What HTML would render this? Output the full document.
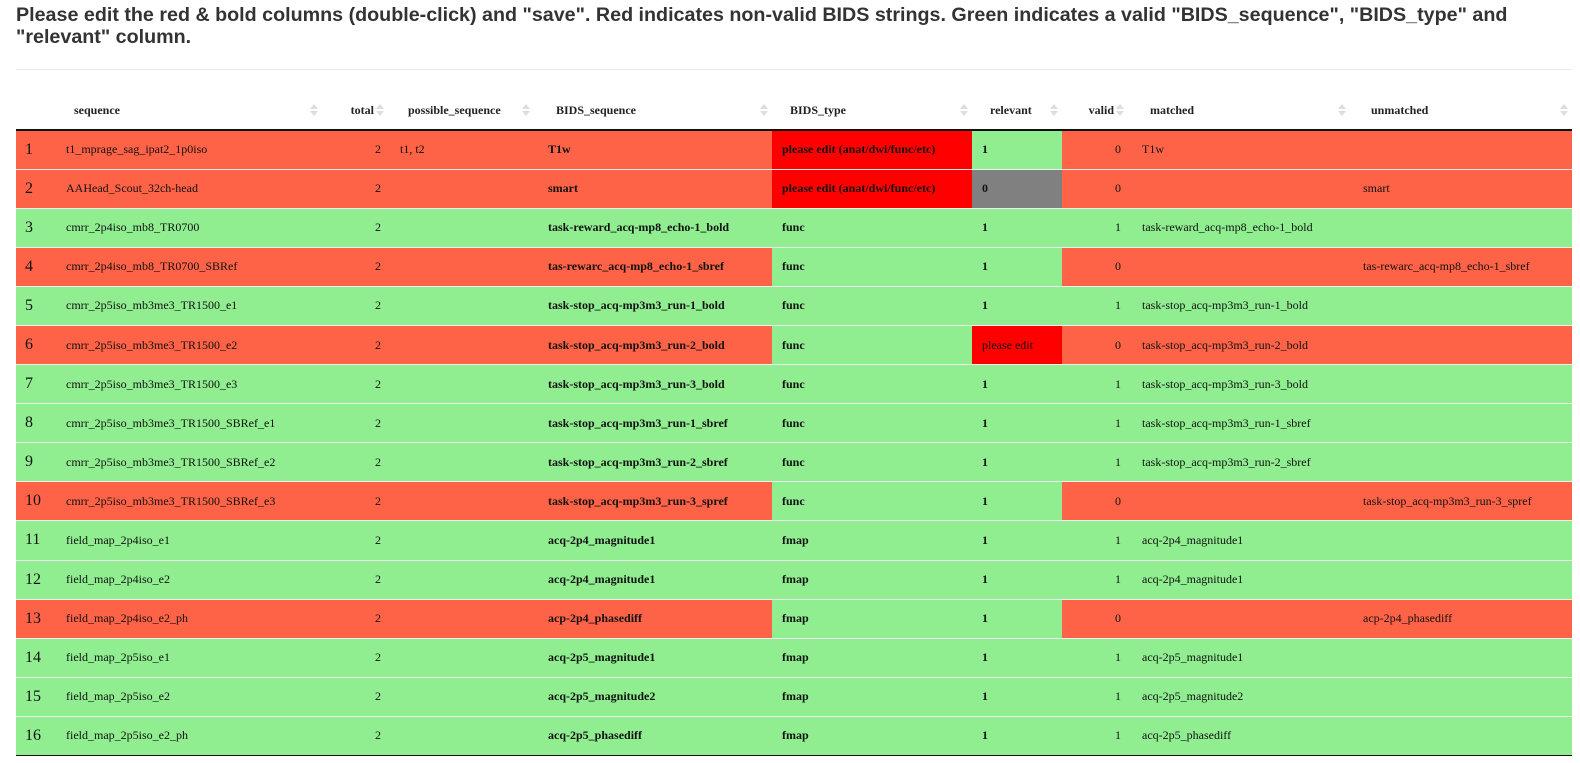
<!DOCTYPE html>
<html><head><meta charset="utf-8"><style>
body{margin:0;background:#fff;font-family:"Liberation Serif",serif;}
h4{position:absolute;left:16px;top:4px;margin:0;font-family:"Liberation Sans",sans-serif;font-weight:bold;font-size:19.7px;line-height:22px;color:#333;white-space:nowrap;}
.hr{position:absolute;left:16px;top:69px;width:1556px;height:1px;background:#e8e8e8;}
table{position:absolute;left:16px;top:92px;border-collapse:collapse;table-layout:fixed;width:1556px;font-size:12px;color:#111;}
th,td{box-sizing:border-box;}
th{height:38px;font-weight:bold;text-align:left;padding:0 0 0 16px;position:relative;border-bottom:2px solid #111;color:#222;}
th.r{text-align:right;padding:0 14px 0 0;}
th .s{position:absolute;right:4px;top:12px;width:8px;height:14px;}
th .s:before{content:"";position:absolute;left:0;top:0;border:4px solid transparent;border-bottom:5px solid #ddd;border-top:0;}
th .s:after{content:"";position:absolute;left:0;top:7px;border:4px solid transparent;border-top:5px solid #ddd;border-bottom:0;}
td{height:39.1px;padding:0 0 0 8px;border-top:1px solid #eee;white-space:nowrap;overflow:hidden;}
tr:first-child td{border-top:none}
td.i{font-size:16px;padding-left:9px}
td.n{text-align:right;padding:0 7px 0 0}
td.b{font-weight:bold;padding-left:14px}
td.t{font-weight:bold;padding-left:10px}
tbody tr:last-child td{border-bottom:1px solid #111}
.T{background:#ff6347}.G{background:#90ee90}.R{background:#ff0000}.Y{background:#808080}
</style></head><body>
<h4>Please edit the red &amp; bold columns (double-click) and "save". Red indicates non-valid BIDS strings. Green indicates a valid "BIDS_sequence", "BIDS_type" and<br>"relevant" column.</h4>
<div class="hr"></div>
<table>
<thead><tr><th style="width:42px"></th><th style="width:264px">sequence<span class="s"></span></th><th class="r" style="width:66px">total<span class="s"></span></th><th style="width:146px;padding-left:20px">possible_sequence<span class="s"></span></th><th style="width:238px;padding-left:22px">BIDS_sequence<span class="s"></span></th><th style="width:200px;padding-left:18px">BIDS_type<span class="s"></span></th><th style="width:90px;padding-left:18px">relevant<span class="s"></span></th><th class="r" style="width:66px">valid<span class="s"></span></th><th style="width:222px;padding-left:22px">matched<span class="s"></span></th><th style="width:222px;padding-left:21px">unmatched<span class="s"></span></th></tr></thead>
<tbody>
<tr class="T"><td class="i">1</td><td>t1_mprage_sag_ipat2_1p0iso</td><td class="n">2</td><td style="padding-left:12px">t1, t2</td><td class="b">T1w</td><td class="t R">please edit (anat/dwi/func/etc)</td><td class="t G">1</td><td class="n">0</td><td style="padding-left:14px">T1w</td><td style="padding-left:13px"></td></tr>
<tr class="T"><td class="i">2</td><td>AAHead_Scout_32ch-head</td><td class="n">2</td><td></td><td class="b">smart</td><td class="t R">please edit (anat/dwi/func/etc)</td><td class="t Y">0</td><td class="n">0</td><td></td><td style="padding-left:13px">smart</td></tr>
<tr class="G"><td class="i">3</td><td>cmrr_2p4iso_mb8_TR0700</td><td class="n">2</td><td></td><td class="b">task-reward_acq-mp8_echo-1_bold</td><td class="t">func</td><td class="t">1</td><td class="n">1</td><td style="padding-left:14px">task-reward_acq-mp8_echo-1_bold</td><td></td></tr>
<tr class="T"><td class="i">4</td><td>cmrr_2p4iso_mb8_TR0700_SBRef</td><td class="n">2</td><td></td><td class="b">tas-rewarc_acq-mp8_echo-1_sbref</td><td class="t G">func</td><td class="t G">1</td><td class="n">0</td><td></td><td style="padding-left:13px">tas-rewarc_acq-mp8_echo-1_sbref</td></tr>
<tr class="G"><td class="i">5</td><td>cmrr_2p5iso_mb3me3_TR1500_e1</td><td class="n">2</td><td></td><td class="b">task-stop_acq-mp3m3_run-1_bold</td><td class="t">func</td><td class="t">1</td><td class="n">1</td><td style="padding-left:14px">task-stop_acq-mp3m3_run-1_bold</td><td></td></tr>
<tr class="T"><td class="i">6</td><td>cmrr_2p5iso_mb3me3_TR1500_e2</td><td class="n">2</td><td></td><td class="b">task-stop_acq-mp3m3_run-2_bold</td><td class="t G">func</td><td class="R" style="padding-left:10px">please edit</td><td class="n">0</td><td style="padding-left:14px">task-stop_acq-mp3m3_run-2_bold</td><td></td></tr>
<tr class="G"><td class="i">7</td><td>cmrr_2p5iso_mb3me3_TR1500_e3</td><td class="n">2</td><td></td><td class="b">task-stop_acq-mp3m3_run-3_bold</td><td class="t">func</td><td class="t">1</td><td class="n">1</td><td style="padding-left:14px">task-stop_acq-mp3m3_run-3_bold</td><td></td></tr>
<tr class="G"><td class="i">8</td><td>cmrr_2p5iso_mb3me3_TR1500_SBRef_e1</td><td class="n">2</td><td></td><td class="b">task-stop_acq-mp3m3_run-1_sbref</td><td class="t">func</td><td class="t">1</td><td class="n">1</td><td style="padding-left:14px">task-stop_acq-mp3m3_run-1_sbref</td><td></td></tr>
<tr class="G"><td class="i">9</td><td>cmrr_2p5iso_mb3me3_TR1500_SBRef_e2</td><td class="n">2</td><td></td><td class="b">task-stop_acq-mp3m3_run-2_sbref</td><td class="t">func</td><td class="t">1</td><td class="n">1</td><td style="padding-left:14px">task-stop_acq-mp3m3_run-2_sbref</td><td></td></tr>
<tr class="T"><td class="i">10</td><td>cmrr_2p5iso_mb3me3_TR1500_SBRef_e3</td><td class="n">2</td><td></td><td class="b">task-stop_acq-mp3m3_run-3_spref</td><td class="t G">func</td><td class="t G">1</td><td class="n">0</td><td></td><td style="padding-left:13px">task-stop_acq-mp3m3_run-3_spref</td></tr>
<tr class="G"><td class="i">11</td><td>field_map_2p4iso_e1</td><td class="n">2</td><td></td><td class="b">acq-2p4_magnitude1</td><td class="t">fmap</td><td class="t">1</td><td class="n">1</td><td style="padding-left:14px">acq-2p4_magnitude1</td><td></td></tr>
<tr class="G"><td class="i">12</td><td>field_map_2p4iso_e2</td><td class="n">2</td><td></td><td class="b">acq-2p4_magnitude1</td><td class="t">fmap</td><td class="t">1</td><td class="n">1</td><td style="padding-left:14px">acq-2p4_magnitude1</td><td></td></tr>
<tr class="T"><td class="i">13</td><td>field_map_2p4iso_e2_ph</td><td class="n">2</td><td></td><td class="b">acp-2p4_phasediff</td><td class="t G">fmap</td><td class="t G">1</td><td class="n">0</td><td></td><td style="padding-left:13px">acp-2p4_phasediff</td></tr>
<tr class="G"><td class="i">14</td><td>field_map_2p5iso_e1</td><td class="n">2</td><td></td><td class="b">acq-2p5_magnitude1</td><td class="t">fmap</td><td class="t">1</td><td class="n">1</td><td style="padding-left:14px">acq-2p5_magnitude1</td><td></td></tr>
<tr class="G"><td class="i">15</td><td>field_map_2p5iso_e2</td><td class="n">2</td><td></td><td class="b">acq-2p5_magnitude2</td><td class="t">fmap</td><td class="t">1</td><td class="n">1</td><td style="padding-left:14px">acq-2p5_magnitude2</td><td></td></tr>
<tr class="G"><td class="i">16</td><td>field_map_2p5iso_e2_ph</td><td class="n">2</td><td></td><td class="b">acq-2p5_phasediff</td><td class="t">fmap</td><td class="t">1</td><td class="n">1</td><td style="padding-left:14px">acq-2p5_phasediff</td><td></td></tr>
</tbody></table>
</body></html>
